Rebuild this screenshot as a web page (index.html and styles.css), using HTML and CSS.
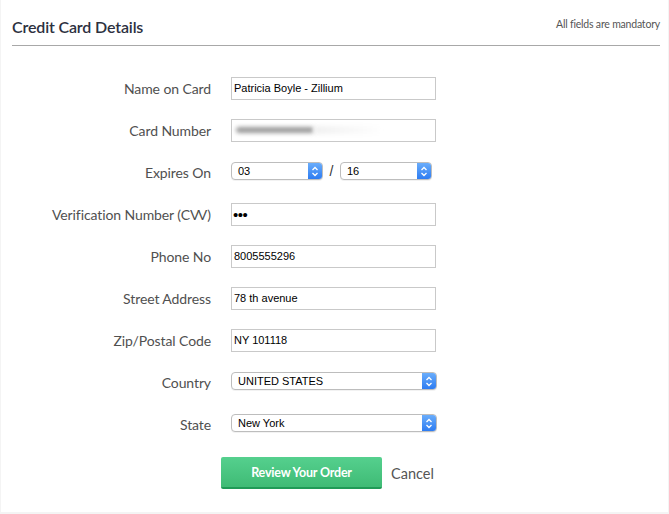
FILE: index.html
```html
<!DOCTYPE html>
<html>
<head>
<meta charset="utf-8">
<link rel="stylesheet" href="styles.css">
</head>
<body>
<div class="card">
  <div class="header">
    <h1 class="title">Credit Card Details</h1>
    <span class="note">All fields are mandatory</span>
  </div>
  <form class="form">
    <label class="label">Name on Card</label>
    <div class="field"><div class="input">Patricia Boyle - Zillium</div></div>

    <label class="label">Card Number</label>
    <div class="field"><div class="input"><span class="blur"></span><span class="blur-tail"></span></div></div>

    <label class="label">Expires On</label>
    <div class="field expires">
      <div class="select small"><span>03</span><span class="arrow"><svg width="8" height="11" viewBox="0 0 8 11"><path d="M1.5 4 L4 1.5 L6.5 4 M1.5 7 L4 9.5 L6.5 7" fill="none" stroke="#fff" stroke-width="1.3"/></svg></span></div>
      <span class="slash">/</span>
      <div class="select small"><span>16</span><span class="arrow"><svg width="8" height="11" viewBox="0 0 8 11"><path d="M1.5 4 L4 1.5 L6.5 4 M1.5 7 L4 9.5 L6.5 7" fill="none" stroke="#fff" stroke-width="1.3"/></svg></span></div>
    </div>

    <label class="label">Verification Number (C<span class="vv">VV</span>)</label>
    <div class="field"><div class="input dots">•••</div></div>

    <label class="label">Phone No</label>
    <div class="field"><div class="input">8005555296</div></div>

    <label class="label">Street Address</label>
    <div class="field"><div class="input">78 th avenue</div></div>

    <label class="label">Zip/Postal Code</label>
    <div class="field"><div class="input">NY 101118</div></div>

    <label class="label">Country</label>
    <div class="field"><div class="select wide"><span>UNITED STATES</span><span class="arrow"><svg width="8" height="11" viewBox="0 0 8 11"><path d="M1.5 4 L4 1.5 L6.5 4 M1.5 7 L4 9.5 L6.5 7" fill="none" stroke="#fff" stroke-width="1.3"/></svg></span></div></div>

    <label class="label">State</label>
    <div class="field"><div class="select wide"><span>New York</span><span class="arrow"><svg width="8" height="11" viewBox="0 0 8 11"><path d="M1.5 4 L4 1.5 L6.5 4 M1.5 7 L4 9.5 L6.5 7" fill="none" stroke="#fff" stroke-width="1.3"/></svg></span></div></div>

    <div class="actions">
      <button type="button" class="btn">Review Your Order</button>
      <a class="cancel">Cancel</a>
    </div>
  </form>
</div>
</body>
</html>
```

FILE: styles.css
```css
html, body {
  margin: 0;
  padding: 0;
  background: #f4f4f4;
}
.card {
  box-sizing: border-box;
  margin-left: 1px;
  width: 667px;
  height: 512px;
  background: #fff;
  font-family: Lato, "Open Sans", sans-serif;
}
.header {
  margin: 0 8px 0 11px;
  height: 45px;
  border-bottom: 1px solid #a8a8a8;
  display: flex;
  justify-content: space-between;
  align-items: flex-start;
}
.title {
  margin: 17px 0 0;
  font-size: 16px;
  font-weight: 600;
  letter-spacing: -0.15px;
  color: #2c3040;
  line-height: 20px;
}
.note {
  margin-top: 17px;
  font-size: 10.5px;
  letter-spacing: -0.2px;
  color: #555;
  line-height: 14px;
}
.form {
  margin-top: 21px;
  display: grid;
  grid-template-columns: 210px 1fr;
  column-gap: 20px;
  grid-auto-rows: 42px;
}
.label {
  text-align: right;
  font-size: 14px;
  letter-spacing: -0.1px;
  color: #505050;
  align-self: center;
}
.vv {
  letter-spacing: -1.5px;
  margin-right: 1.5px;
}
.field {
  display: flex;
  align-items: center;
}
.input {
  box-sizing: border-box;
  width: 205px;
  height: 23px;
  border: 1px solid #c9c9c9;
  padding: 0 2px;
  font-family: "Liberation Sans", Arial, sans-serif;
  font-size: 11px;
  color: #000;
  display: flex;
  align-items: center;
}
.dots {
  font-size: 15px;
  letter-spacing: -0.5px;
  padding-left: 1px;
}
.blur {
  display: block;
  width: 78px;
  height: 6px;
  margin-left: 2px;
  background: #9a9a9a;
  border-radius: 3px;
  filter: blur(2px);
}
.blur-tail {
  display: block;
  width: 70px;
  height: 8px;
  background: linear-gradient(90deg, #f0f0f0, #fff);
  filter: blur(2px);
}
.slash {
  font-family: "Liberation Sans", Arial, sans-serif;
  font-size: 14px;
  color: #333;
  width: 17px;
  text-align: center;
  margin-bottom: 2px;
}
.select {
  box-sizing: border-box;
  height: 18px;
  margin-bottom: 2px;
  border: 1px solid #bdbdbd;
  border-radius: 4px;
  background: #fff;
  display: flex;
  align-items: center;
  justify-content: space-between;
  overflow: hidden;
  font-family: "Liberation Sans", Arial, sans-serif;
  font-size: 11px;
  color: #000;
  box-shadow: 0 1px 0 rgba(0,0,0,0.05);
}
.select > span:first-child {
  padding-left: 6px;
}
.select.small { width: 92px; }
.select.wide { width: 206px; }
.arrow {
  width: 14px;
  height: 100%;
  background: linear-gradient(#6aadfb, #2d7cf2);
  display: flex;
  align-items: center;
  justify-content: center;
}
.actions {
  grid-column: 2;
  margin-left: -10px;
  margin-top: 14px;
  display: flex;
  align-items: center;
  gap: 9px;
}
.btn {
  box-sizing: border-box;
  width: 161px;
  height: 32px;
  border: 0;
  border-bottom: 2px solid #1f9a56;
  border-radius: 2px;
  background: linear-gradient(#55d08e, #3fbb75);
  color: #fff;
  font-family: Lato, "Open Sans", sans-serif;
  font-weight: 700;
  font-size: 12.5px;
  letter-spacing: -0.2px;
  padding: 0;
}
.cancel {
  font-size: 14.5px;
  color: #555;
}
```
